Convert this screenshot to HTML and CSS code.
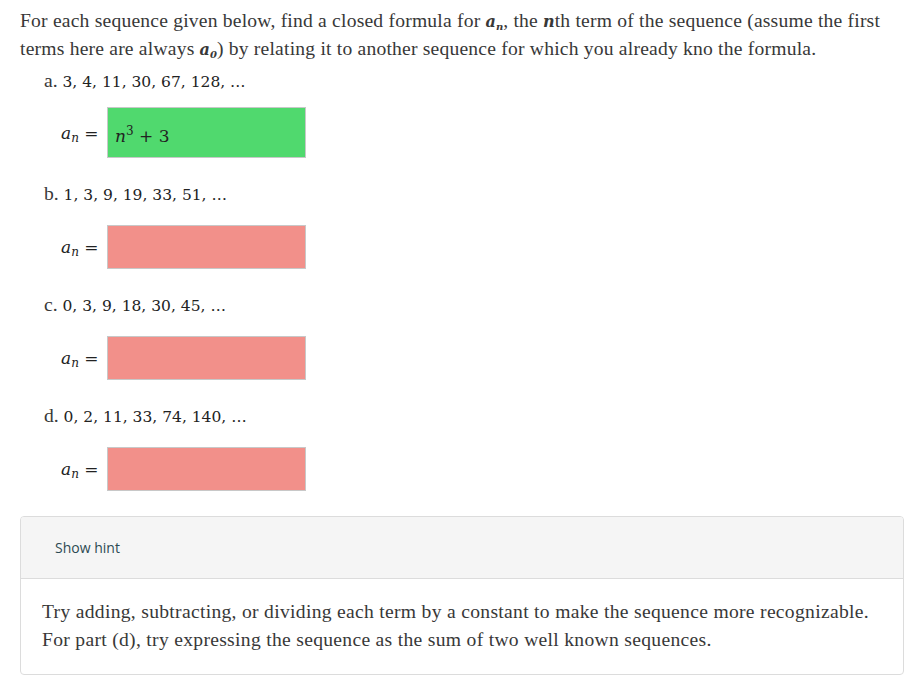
FILE: index.html
```html
<!DOCTYPE html>
<html>
<head>
<meta charset="utf-8">
<link rel="stylesheet" href="styles.css">
</head>
<body>
<div class="page">
  <p class="intro">For each sequence given below, find a closed formula for <span class="mv">a<sub>n</sub></span>, the <span class="mv">n</span>th term of the sequence (assume the first terms here are always <span class="mv">a<sub class="up">0</sub></span>) by relating it to another sequence for which you already kno the formula.</p>
  <div class="parts">
    <div class="part">
      <div class="label">a. <span class="math">3, 4, 11, 30, 67, 128, …</span></div>
      <div class="row row-tall">
        <span class="an"><i>a</i><sub>n</sub> =</span>
        <div class="box ok"><span class="ans"><i>n</i><sup>3</sup> + 3</span></div>
      </div>
    </div>
    <div class="part">
      <div class="label">b. <span class="math">1, 3, 9, 19, 33, 51, …</span></div>
      <div class="row">
        <span class="an"><i>a</i><sub>n</sub> =</span>
        <div class="box bad"></div>
      </div>
    </div>
    <div class="part">
      <div class="label">c. <span class="math">0, 3, 9, 18, 30, 45, …</span></div>
      <div class="row">
        <span class="an"><i>a</i><sub>n</sub> =</span>
        <div class="box bad"></div>
      </div>
    </div>
    <div class="part">
      <div class="label">d. <span class="math">0, 2, 11, 33, 74, 140, …</span></div>
      <div class="row">
        <span class="an"><i>a</i><sub>n</sub> =</span>
        <div class="box bad"></div>
      </div>
    </div>
  </div>
  <div class="hint">
    <div class="hint-head">Show hint</div>
    <div class="hint-body">Try adding, subtracting, or dividing each term by a constant to make the sequence more recognizable. For part (d), try expressing the sequence as the sum of two well known sequences.</div>
  </div>
</div>
</body>
</html>
```

FILE: styles.css
```css
html, body {
  margin: 0;
  padding: 0;
  background: #fff;
}
.page {
  padding: 7px 8px 0 20px;
  width: 884px;
  font-family: "Liberation Serif", "DejaVu Serif", serif;
  color: #383838;
}
.intro {
  margin: 0;
  font-size: 19.6px;
  letter-spacing: 0.2px;
  line-height: 27px;
}
.mv {
  font-style: italic;
  font-weight: bold;
  font-family: "DejaVu Serif", serif;
  font-size: 16px;
  letter-spacing: 0;
}
.mv sub {
  font-size: 10px;
  vertical-align: -3px;
  line-height: 0;
}
.parts {
  padding-left: 24px;
}
.part .label {
  height: 24px;
  line-height: 24px;
  font-size: 19.6px;
  margin-top: 24px;
}
.part:first-child .label {
  margin-top: 6px;
}
.math {
  font-family: "DejaVu Serif", serif;
  font-size: 15.5px;
  color: #222;
}
.row {
  display: flex;
  align-items: center;
  margin-top: 19px;
  padding-left: 17px;
}
.row-tall {
  margin-top: 14px;
}
.an {
  font-family: "DejaVu Serif", serif;
  font-size: 17px;
  color: #222;
  width: 46px;
  white-space: nowrap;
}
.an sub {
  font-size: 12px;
  font-style: italic;
  vertical-align: -3px;
  line-height: 0;
}
.box {
  width: 197px;
  height: 42px;
  border: 1px solid #c8c8c8;
  box-sizing: content-box;
  display: flex;
  align-items: center;
}
.row-tall .box {
  height: 49px;
}
.ok {
  background: #50d96e;
}
.bad {
  background: #f2908a;
}
.ans {
  font-family: "DejaVu Serif", serif;
  font-size: 17px;
  color: #222;
  padding-left: 7px;
  padding-top: 6px;
}
.ans sup {
  font-size: 12px;
  vertical-align: 7px;
  line-height: 0;
}
.hint {
  margin-top: 25px;
  border: 1px solid #dcdcdc;
  border-radius: 4px;
  overflow: hidden;
}
.hint-head {
  background: #f5f5f5;
  height: 61px;
  border-bottom: 1px solid #dcdcdc;
  display: flex;
  align-items: center;
  padding-left: 34px;
  font-family: "Open Sans", sans-serif;
  font-size: 14px;
  color: #2c4a52;
}
.hint-body {
  padding: 19px 21px 20px 21px;
  font-size: 19.6px;
  letter-spacing: 0.3px;
  line-height: 28px;
}
```
